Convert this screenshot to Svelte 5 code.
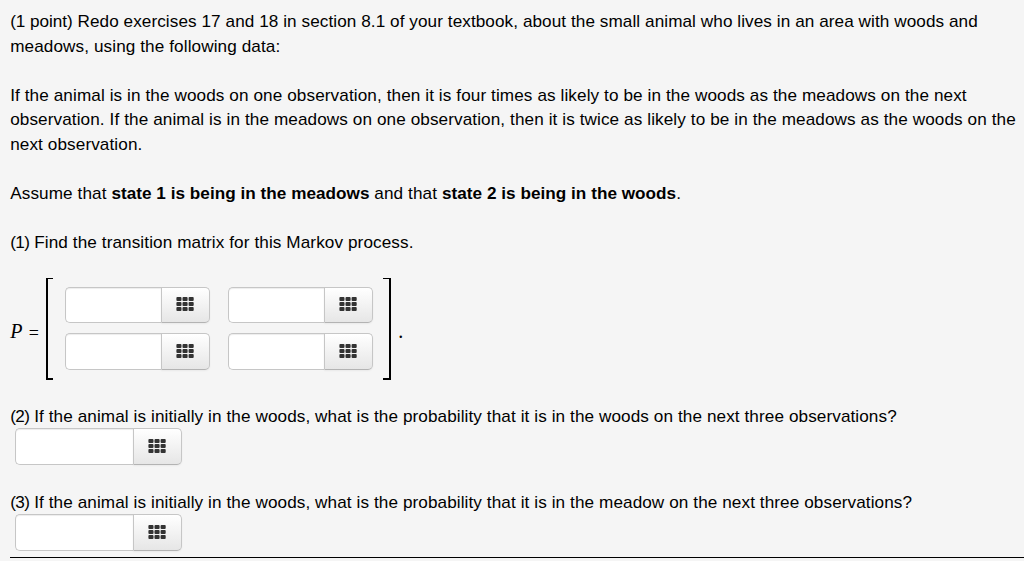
<script>
  let matrix = $state([["", ""], ["", ""]]);
  let woods = $state("");
  let meadow = $state("");
</script>

{#snippet keypad()}
  <svg class="icon" viewBox="0 0 18 14" width="18" height="14">
    {#each [0, 1, 2] as row}
      {#each [0, 1, 2] as col}
        <rect x={0.4 + col * 6.1} y={row * 5} width="5.1" height="3.9" rx="0.9" />
      {/each}
    {/each}
  </svg>
{/snippet}

<main>
  <p>
    <span class="points">(1 point)</span> <span class="intro">Redo exercises 17 and 18 in section 8.1 of your textbook, about the small animal who lives in an area with woods and</span><br />
    meadows, using the following data:
  </p>
  <p>
    If the animal is in the woods on one observation, then it is four times as likely to be in the woods as the meadows on the next<br />
    observation. If the animal is in the meadows on one observation, then it is twice as likely to be in the meadows as the woods on the<br />
    next observation.
  </p>
  <p>
    Assume that <b>state 1 is being in the meadows</b> and that <b>state 2 is being in the woods</b>.
  </p>
  <p><span class="number">(1)</span> Find the transition matrix for this Markov process.</p>

  <div class="equation">
    <span class="name"><i>P</i> <span class="equals">=</span></span>
    <div class="bracket left"></div>
    <div class="matrix">
      {#each matrix as row, r}
        {#each row as _, c}
          <div class="answer">
            <input type="text" bind:value={matrix[r][c]} />
            <button type="button">{@render keypad()}</button>
          </div>
        {/each}
      {/each}
    </div>
    <div class="bracket right"></div>
    <span class="dot">.</span>
  </div>

  <div class="question">
    <div><span class="number">(2)</span> If the animal is initially in the woods, what is the probability that it is in the woods on the next three observations?</div>
    <div class="answer wide">
      <input type="text" bind:value={woods} />
      <button type="button">{@render keypad()}</button>
    </div>
  </div>
  <div class="question">
    <div><span class="number">(3)</span> If the animal is initially in the woods, what is the probability that it is in the meadow on the next three observations?</div>
    <div class="answer wide">
      <input type="text" bind:value={meadow} />
      <button type="button">{@render keypad()}</button>
    </div>
  </div>
  <hr />
</main>

<style>
  :global(body) { background: #f5f5f5; overflow: hidden; }
  main {
    height: 561px;
    box-sizing: border-box;
    padding: 9px 0 0 10.2px;
    font-family: "Liberation Sans", Arial, sans-serif;
    font-size: 17.15px;
    line-height: 24.5px;
    letter-spacing: 0.097px;
    color: #000;
    white-space: nowrap;
  }
  p { margin: 0 0 24.5px; }
  b { letter-spacing: 0.03px; }
  .points { letter-spacing: -0.05px; }
  .intro { letter-spacing: 0.073px; }
  .number { letter-spacing: -0.6px; }
  .question { height: 86px; letter-spacing: 0.09px; }
  .equation { display: flex; height: 102px; margin-top: -1px; }
  .name { width: 36px; padding-top: 41px; font-family: "Liberation Serif", "Times New Roman", serif; font-size: 20px; }
  .equals { position: relative; top: 1px; left: 1px; font-size: 18px; }
  .bracket { width: 8px; box-sizing: border-box; border: solid #000; border-width: 1px 0 2px; }
  .left { width: 7px; border-left-width: 2px; }
  .right { border-right-width: 2px; }
  .matrix { display: grid; grid-template-columns: 145px 145px; gap: 10px 18px; align-content: start; padding: 9px 10px 0 12px; }
  .dot { padding: 41px 0 0 7px; font-family: "Liberation Serif", serif; font-size: 20px; }
  .answer { display: flex; width: 145px; height: 36.5px; }
  .wide { width: 167px; height: 37px; margin: -1px 0 0 5px; }
  input, button { box-sizing: border-box; height: 100%; margin: 0; border: 1px solid #c6c6c6; outline: none; }
  input {
    flex: 1;
    min-width: 0;
    padding: 0 6px;
    font-size: 17px;
    background: #fff;
    border-right: 0;
    border-radius: 5px 0 0 5px;
    box-shadow: inset 0 1px 1px rgba(0, 0, 0, 0.075);
  }
  button {
    width: 49px;
    padding: 0 1px 1px 0;
    display: flex;
    align-items: center;
    justify-content: center;
    background: linear-gradient(#fff, #e6e6e6);
    border-bottom-color: #b3b3b3;
    border-radius: 0 5px 5px 0;
    box-shadow: 0 1px 2px rgba(0, 0, 0, 0.05);
  }
  .icon { display: block; fill: #333; }
  .equation + .question { margin-top: 24.5px; }
  hr { margin: -19px 0 0; border: 0; height: 1px; background: #000; }
</style>
